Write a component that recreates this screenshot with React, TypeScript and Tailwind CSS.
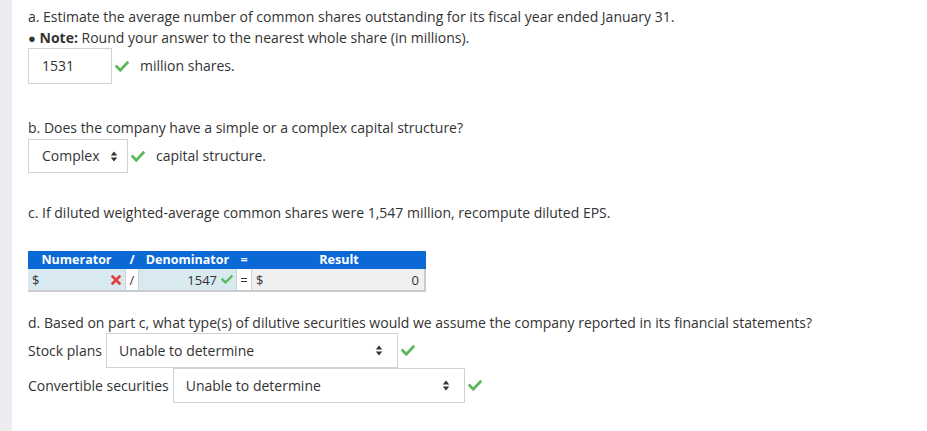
import React from "react";

const Check = ({ className = "w-[15px] h-[13px]" }: { className?: string }) => (
  <svg viewBox="0 66 512 380" className={className} preserveAspectRatio="none">
    <path
      d="M173.898 439.404l-166.4-166.4c-9.997-9.997-9.997-26.206 0-36.204l36.203-36.204c9.997-9.998 26.207-9.998 36.204 0L192 312.69 432.095 72.596c9.997-9.997 26.207-9.997 36.204 0l36.203 36.204c9.997 9.997 9.997 26.206 0 36.204l-294.4 294.401c-9.998 9.997-26.207 9.997-36.204-.001z"
      fill="#5cb85c"
    />
  </svg>
);

const Cross = () => (
  <svg viewBox="0 80 352 352" className="w-[10px] h-[10px]">
    <path
      d="M242.72 256l100.07-100.07c12.28-12.28 12.28-32.19 0-44.48l-22.24-22.24c-12.28-12.28-32.19-12.28-44.48 0L176 189.28 75.930 89.21c-12.28-12.28-32.19-12.28-44.48 0L9.21 111.45c-12.28 12.28-12.28 32.19 0 44.48L109.28 256 9.21 356.07c-12.28 12.28-12.28 32.19 0 44.48l22.24 22.24c12.28 12.28 32.2 12.28 44.48 0L176 322.72l100.07 100.07c12.28 12.28 32.2 12.28 44.48 0l22.240-22.24c12.28-12.28 12.28-32.19 0-44.48L242.72 256z"
      fill="#e0413e"
    />
  </svg>
);

const Sort = () => (
  <svg viewBox="0 0 8 12" className="w-[8px] h-[11px]">
    <path d="M4 0.5 L7.5 4.8 L0.5 4.8 Z M4 11.5 L7.5 7.2 L0.5 7.2 Z" fill="#333" />
  </svg>
);

export default function App() {
  return (
    <div
      className="flex w-[927px] h-[431px] bg-white text-[#333333] text-[14px] leading-[20px]"
      style={{ fontFamily: '"Open Sans", "Noto Sans", sans-serif' }}
    >
      <div className="w-[12px] shrink-0 bg-[#ebecef]" />
      <div className="flex flex-col pl-[16px] pt-[7px]">
        <div>a. Estimate the average number of common shares outstanding for its fiscal year ended January 31.</div>
        <div className="mt-[1px]">
          <span className="text-[13px]">●</span> <span className="font-bold">Note:</span> Round your answer to the nearest whole share (in millions).
        </div>
        <div className="flex items-center">
          <div className="w-[84px] h-[36px] border border-[#cfd3d8] flex items-center pl-[13px]">1531</div>
          <Check className="w-[14px] h-[11px] ml-[3px] mt-[1px]" />
          <span className="ml-[11px]">million shares.</span>
        </div>

        <div className="mt-[34px]">b. Does the company have a simple or a complex capital structure?</div>
        <div className="flex items-center mt-[1px]">
          <div className="w-[100px] h-[34px] border border-[#cfd3d8] flex items-center pl-[13px] gap-[10px]">
            <span>Complex</span>
            <Sort />
          </div>
          <Check className="w-[14px] h-[11px] ml-[3px]" />
          <span className="ml-[11px]">capital structure.</span>
        </div>

        <div className="mt-[30px]">c. If diluted weighted-average common shares were 1,547 million, recompute diluted EPS.</div>

        <div className="mt-[28px] w-[398px] text-[13px] leading-[18px]">
          <div className="flex bg-[#0b69d6] text-white font-bold h-[18px] items-center text-[12.5px]">
            <div className="w-[97px] text-center">Numerator</div>
            <div className="w-[14px] text-center">/</div>
            <div className="w-[97px] text-center">Denominator</div>
            <div className="w-[16px] text-center">=</div>
            <div className="flex-1 text-center">Result</div>
          </div>
          <div className="flex h-[23px] border-b-2 border-[#c8cbcf]">
            <div className="w-[97px] bg-[#d8eaf0] flex items-center justify-between pl-[4px] pr-[4px]">
              <span>$</span>
              <Cross />
            </div>
            <div className="w-[14px] bg-white flex items-center justify-center border-x border-[#d0d0d0]">/</div>
            <div className="w-[97px] bg-[#d8eaf0] flex items-center justify-end pr-[3px] gap-[4px]">
              <span>1547</span>
              <Check className="w-[12px] h-[9px]" />
            </div>
            <div className="w-[16px] bg-white flex items-center justify-center border-x border-[#d0d0d0]">=</div>
            <div className="flex-1 bg-[#f0f0f0] flex items-center justify-between pl-[4px] pr-[5px] border-r-2 border-[#c8cbcf]">
              <span>$</span>
              <span>0</span>
            </div>
          </div>
        </div>

        <div className="mt-[21px]">d. Based on part c, what type(s) of dilutive securities would we assume the company reported in its financial statements?</div>
        <div className="flex items-center">
          <span>Stock plans</span>
          <div className="ml-[4px] w-[292px] h-[35px] border border-[#cfd3d8] flex items-center justify-between pl-[12px] pr-[14px]">
            <span>Unable to determine</span>
            <Sort />
          </div>
          <Check className="w-[14px] h-[11px] ml-[3px]" />
        </div>
        <div className="flex items-center">
          <span>Convertible securities</span>
          <div className="ml-[4px] w-[292px] h-[35px] border border-[#cfd3d8] flex items-center justify-between pl-[12px] pr-[14px]">
            <span>Unable to determine</span>
            <Sort />
          </div>
          <Check className="w-[14px] h-[11px] ml-[3px]" />
        </div>
      </div>
    </div>
  );
}
